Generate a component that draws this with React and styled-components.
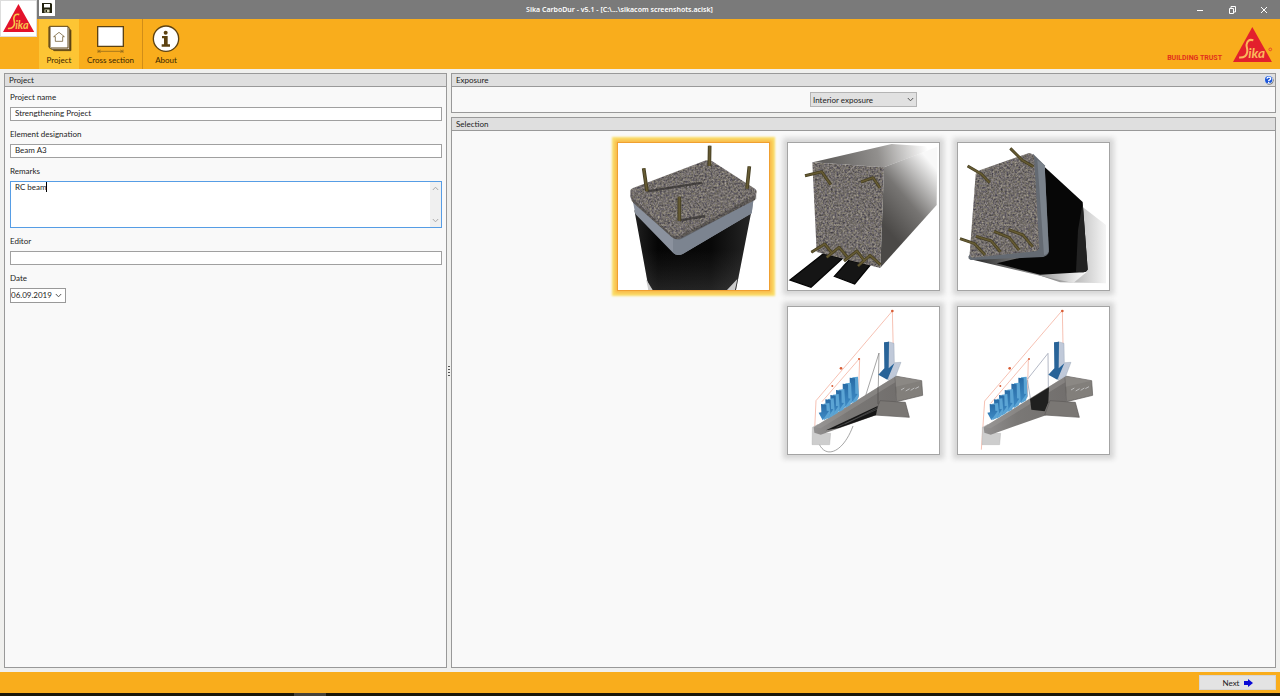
import React from "react";
import styled, { createGlobalStyle } from "styled-components";

const GlobalStyle = createGlobalStyle`
  * { box-sizing: border-box; }
  body { margin: 0; background: #f0f0ee; }
  body, button, input, select, textarea {
    font-family: Lato, "Noto Sans", sans-serif;
    font-size: 8px;
    line-height: 12px;
    color: #1c1c1c;
  }
  svg { display: block; }
`;

const Window = styled.div`
  min-height: 100vh;
  display: flex;
  flex-direction: column;
`;

const Header = styled.header`
  display: grid;
  grid-template-columns: 39px 1fr;
  grid-template-rows: 19px 50px;
  background: #f9ad1c;
`;

const LogoBox = styled.div`
  grid-column: 1;
  grid-row: 1 / 3;
  z-index: 1;
  width: 37px;
  height: 37px;
  padding: 3px 2px;
  background: #fff;
  border: 1px solid #ddd;
`;

const TitleBar = styled.div`
  grid-column: 1 / 3;
  grid-row: 1;
  display: flex;
  align-items: stretch;
  padding-left: 39px;
  background: #7a7a7a;
`;

const SaveButton = styled.button`
  width: 16px;
  height: 16px;
  padding: 3px;
  border: 0;
  background: #fff;
`;

const Title = styled.h1`
  flex: 1;
  margin: 0;
  text-align: center;
  font-family: "Noto Sans", sans-serif;
  font-size: 7px;
  line-height: 19px;
  font-weight: 600;
  color: #fff;
`;

const WindowButton = styled.button`
  display: flex;
  align-items: center;
  justify-content: center;
  width: 32px;
  padding: 0;
  border: 0;
  background: none;
`;

const Toolbar = styled.nav`
  grid-column: 2;
  grid-row: 2;
  display: flex;
`;

const Tool = styled.button`
  display: flex;
  flex-direction: column;
  align-items: center;
  gap: 1px;
  width: ${(p) => p.$width}px;
  padding: 6px 0 0;
  border: 0;
  border-right: ${(p) => (p.$divider ? "1px solid #d08d18" : "0")};
  background: ${(p) => (p.$active ? "#fdc534" : "none")};
  color: #3a2600;
  white-space: nowrap;
`;

const Brand = styled.div`
  display: flex;
  align-items: flex-end;
  gap: 11px;
  margin-left: auto;
  padding: 0 7px 7px 0;
`;

const Slogan = styled.span`
  font-family: Roboto, sans-serif;
  font-size: 7px;
  line-height: 8px;
  font-weight: 700;
  color: #e2311d;
`;

const Main = styled.main`
  flex: 1;
  display: grid;
  grid-template-columns: minmax(0, 443fr) 4px minmax(0, 825fr);
  padding: 4px;
`;

const Splitter = styled.div`
  display: flex;
  align-items: center;
  justify-content: center;
`;

const Column = styled.div`
  display: flex;
  flex-direction: column;
  gap: 4px;
`;

const Panel = styled.section`
  flex: ${(p) => (p.$grow ? "1" : "none")};
  border: 1px solid #999;
  background: #f9f9f9;
`;

const PanelHeader = styled.div`
  display: flex;
  align-items: center;
  justify-content: space-between;
  height: 13px;
  padding: 0 1px 0 4px;
  background: #dfdfdf;
  border-bottom: 1px solid #999;
`;

const PanelTitle = styled.h2`
  margin: 0;
  font-size: 8px;
  line-height: 12px;
  font-weight: 400;
`;

const HelpButton = styled.button`
  padding: 0;
  border: 0;
  background: none;
`;

const Form = styled.form`
  display: flex;
  flex-direction: column;
  gap: 7px;
  padding: 4px 4px 4px 5px;
`;

const Field = styled.div`
  display: flex;
  flex-direction: column;
  align-items: flex-start;
  gap: 4px;
`;

const Label = styled.label`
  line-height: 12px;
`;

const TextInput = styled.input`
  width: 100%;
  height: 14px;
  padding: 0 4px 2px;
  border: 1px solid #a0a0a0;
  background: #fff;
  outline: 0;
`;

const RemarksBox = styled.div`
  position: relative;
  display: flex;
  width: 100%;
  height: 47px;
  border: 1px solid #569de5;
  background: #fff;
`;

const RemarksText = styled.textarea`
  flex: 1;
  padding: 0 4px;
  border: 0;
  outline: 0;
  resize: none;
  overflow: hidden;
  line-height: 10px;
  background: none;
`;

const Caret = styled.span`
  position: absolute;
  left: 35px;
  top: 0;
  width: 1px;
  height: 10px;
  background: #000;
`;

const ScrollTrack = styled.div`
  display: flex;
  flex-direction: column;
  align-items: center;
  justify-content: space-between;
  width: 11px;
  padding: 4px 0;
  background: #f0f0f0;
`;

const DateBox = styled.div`
  display: flex;
  align-items: center;
  width: 56px;
  height: 15px;
  padding-right: 3px;
  border: 1px solid #999;
  background: #fff;
`;

const DateInput = styled.input`
  flex: 1;
  min-width: 0;
  height: 13px;
  padding: 0 0 2px;
  border: 0;
  outline: 0;
  background: none;
`;

const PlainButton = styled.button`
  padding: 0;
  border: 0;
  background: none;
`;

const ExposureBody = styled.div`
  display: flex;
  justify-content: center;
  padding: 5px 0 5px;
`;

const SelectBox = styled.div`
  display: grid;
  align-items: center;
  width: 107px;
  height: 15px;
`;

const Select = styled.select`
  grid-area: 1 / 1;
  width: 100%;
  height: 15px;
  padding: 0 2px;
  appearance: none;
  border: 1px solid #b4b4b4;
  border-radius: 0;
  background: #e1e1e1;
`;

const SelectArrow = styled.span`
  grid-area: 1 / 1;
  justify-self: end;
  margin-right: 3px;
  pointer-events: none;
`;

const Tiles = styled.div`
  display: grid;
  grid-template-columns: repeat(3, 153px);
  grid-auto-rows: 149px;
  gap: 15px 17px;
  justify-content: center;
  padding-top: 11px;
`;

const Tile = styled.button`
  grid-column: ${(p) => p.$column};
  padding: 0;
  border: 1px solid ${(p) => (p.$active ? "#f0a030" : "#a4a4a4")};
  background: #fff;
  box-shadow: ${(p) =>
    p.$active
      ? "0 0 3px 2px #f9b94a, 0 0 2px 5px #fade6a"
      : "0 0 5px 4px #d6d6d6"};
`;

const Footer = styled.footer`
  display: flex;
  justify-content: flex-end;
  height: 21px;
  padding: 3px 4px;
  background: #f9ad1c;
`;

const NextButton = styled.button`
  display: flex;
  align-items: center;
  justify-content: center;
  gap: 4px;
  width: 77px;
  height: 15px;
  padding: 0;
  border: 1px solid #d6d6d6;
  background: #e3e3e3;
`;

const Taskbar = styled.div`
  height: 3px;
  padding-left: 23%;
  background: #1b1708;
`;

const TaskbarItem = styled.div`
  width: 32px;
  height: 3px;
  background: #464238;
`;

function SikaLogo({ width, height, color, ink, mark }) {
  return (
    <svg width={width} height={height} viewBox="0 0 118 103" role="img" aria-label="Sika">
      <path d="M57 0L115 103H0Z" fill={color} />
      <g fill={ink} fontFamily="Lato, sans-serif" fontStyle="italic" fontWeight="700">
        <text x="45" y="91" fontSize="40">ika</text>
      </g>
      <path d="M60 39C46 35 42 42 40 52C39 60 44 64 42 74C40 86 33 91 18 90" fill="none" stroke={ink} strokeWidth="6" />
      {mark && <circle cx="110" cy="66" r="4" fill="none" stroke={color} strokeWidth="2" />}
    </svg>
  );
}

function Chevron({ up, color = "#555" }) {
  return (
    <svg width="7" height="5" viewBox="0 0 7 5" fill="none" stroke={color}>
      <path d={up ? "M.8 4L3.500 1.200L6.200 4" : "M.8 1L3.500 3.800L6.200 1"} />
    </svg>
  );
}

function SaveIcon() {
  return (
    <svg width="10" height="10" viewBox="0 0 10 10">
      <path d="M0 0H9L10 1V10H0Z" fill="#22220f" />
      <path d="M2 1H8V4.500H2Z" fill="#fff" />
      <path d="M2.500 6.500H7.500V9.500H2.500Z" fill="#dcdcbc" />
      <path d="M3.500 7H5V9H3.500Z" fill="#22220f" />
    </svg>
  );
}

function ProjectIcon() {
  return (
    <svg width="25" height="28" viewBox="141 75 75 84" stroke="#5c4212">
      <path d="M155 85H207L213 91V152H162L155 146Z" fill="#5c4212" strokeWidth="2" />
      <path d="M153 83H208V148H153Z" fill="#fff" strokeWidth="2" />
      <path d="M148 79H204V144H148Z" fill="#fff" strokeWidth="3" />
      <path d="M144 84h9M144 90h9M144 96h9M144 102h9M144 108h9M144 114h9M144 120h9M144 126h9M144 132h9M144 138h9" strokeWidth="3" />
      <path d="M161 110L177 97L193 110H188V124H166V110Z" fill="none" strokeWidth="2" />
    </svg>
  );
}

function CrossSectionIcon() {
  return (
    <svg width="29" height="28" viewBox="291 75 87 84" stroke="#5c4212">
      <path d="M296 80H373V139H296Z" fill="#fff" strokeWidth="4" />
      <path d="M298 154H371M297 149V159M372 149V159M305 150L298 154L305 158M364 150L371 154L364 158" fill="none" stroke="#805d1b" strokeWidth="2" />
    </svg>
  );
}

function AboutIcon() {
  return (
    <svg width="28" height="28" viewBox="456 75 84 84">
      <circle cx="498" cy="116" r="38" fill="#fff" stroke="#5c4212" strokeWidth="4" />
      <circle cx="497" cy="98" r="6" fill="#5c4212" />
      <path d="M486 108H503V133H510V140H485V133H492V115H486Z" fill="#5c4212" />
    </svg>
  );
}

function HelpIcon() {
  return (
    <svg width="10" height="10" viewBox="0 0 30 30">
      <circle cx="16" cy="16" r="13" fill="#777" />
      <circle cx="14" cy="14" r="13" fill="#d5e6fa" />
      <circle cx="14" cy="14" r="11" fill="#1c55d8" />
      <path d="M9 11C9 5 20 5 20 11C20 15 14 14 14 18M14 20V24" fill="none" stroke="#fff" strokeWidth="4" />
    </svg>
  );
}

function Defs() {
  return (
    <svg width="0" height="0" aria-hidden="true">
      <defs>
        <filter id="concrete" x="0" y="0" width="100%" height="100%" colorInterpolationFilters="sRGB">
          <feTurbulence type="fractalNoise" baseFrequency="0.17" numOctaves="3" seed="5" result="noise" />
          <feColorMatrix in="noise" type="matrix" values=".42 .28 0 0 .1  .4 .28 0 0 .09  .36 .2 .12 0 .08  0 0 0 0 1" result="grain" />
          <feComposite in="grain" in2="SourceGraphic" operator="in" />
        </filter>
        <linearGradient id="wrapFront" x1="0" y1="0" x2="1" y2="0">
          <stop offset="0" stopColor="#202020" />
          <stop offset=".2" stopColor="#050505" />
          <stop offset=".65" stopColor="#080808" />
          <stop offset="1" stopColor="#262626" />
        </linearGradient>
        <linearGradient id="wrapFade" x1="0" y1="0" x2="0" y2="1">
          <stop offset=".5" stopColor="#555" stopOpacity="0" />
          <stop offset="1" stopColor="#666" stopOpacity=".3" />
        </linearGradient>
        <linearGradient id="beamSide" gradientUnits="userSpaceOnUse" x1="305" y1="280" x2="480" y2="130">
          <stop offset="0" stopColor="#4b4947" />
          <stop offset=".45" stopColor="#777573" />
          <stop offset="1" stopColor="#f8f8f8" />
        </linearGradient>
        <linearGradient id="beamTop" gradientUnits="userSpaceOnUse" x1="150" y1="110" x2="440" y2="45">
          <stop offset="0" stopColor="#63615f" />
          <stop offset=".5" stopColor="#92908e" />
          <stop offset="1" stopColor="#fff" />
        </linearGradient>
        <linearGradient id="haze" x1="0" y1="0" x2="1" y2="0">
          <stop offset="0" stopColor="#777" />
          <stop offset="1" stopColor="#f5f5f5" />
        </linearGradient>
        <linearGradient id="underside" x1="0" y1="0" x2="1" y2="0">
          <stop offset="0" stopColor="#222" />
          <stop offset=".6" stopColor="#999" />
          <stop offset="1" stopColor="#fff" />
        </linearGradient>
        <linearGradient id="girder" x1="0" y1="0" x2="1" y2="0">
          <stop offset="0" stopColor="#929090" />
          <stop offset=".4" stopColor="#7a7876" />
          <stop offset="1" stopColor="#726f6d" />
        </linearGradient>
        <linearGradient id="load" x1="0" y1="0" x2="0" y2="1">
          <stop offset="0" stopColor="#286ba5" />
          <stop offset="1" stopColor="#3f8cc6" />
        </linearGradient>
      </defs>
    </svg>
  );
}

function Bars({ d, width = 11 }) {
  return (
    <g fill="none" strokeLinejoin="round">
      <path d={d} stroke="#463f23" strokeWidth={width} />
      <path d={d} stroke="#665b33" strokeWidth={width / 2} />
    </g>
  );
}

function WrappedColumn() {
  return (
    <svg width="151" height="147" viewBox="39 39 453 441">
      <path d="M88 240L218 374L441 235L393 480H132Z" fill="url(#wrapFront)" />
      <path d="M88 240L218 374L441 235L393 480H132Z" fill="url(#wrapFade)" />
      <path d="M123 447L143 480H130ZM397 447L390 480H366Z" fill="#ccc" />
      <path d="M79 190L204 318L448 190L440 250L233 372Q216 379 204 368L91 252Z" fill="#8b929e" />
      <path d="M204 318L448 190L440 250L233 372Q216 379 204 368Z" fill="#7c8490" />
      <path d="M76 183Q75 178 84 174L303 91Q313 89 322 94L450 176Q458 182 454 191L450 210L230 323Q213 332 200 321L87 220Q78 213 76 200Z" fill="#686563" filter="url(#concrete)" />
      <path d="M77 192Q77 200 89 211L200 314Q214 322 230 314L454 194V207L230 326Q213 333 200 321L84 218Z" fill="#373533" opacity=".4" />
      <path d="M127 184L292 158M224 272L301 258" stroke="#343130" strokeWidth="7" opacity=".75" />
      <Bars d="M116 115L126 184M314 47L313 108M433 109L426 176M223 200L223 273" />
    </svg>
  );
}

function PlateBeam() {
  return (
    <svg width="151" height="147" viewBox="24 39 453 441">
      <path d="M30 450L132 370L187 386L93 472ZM163 439L207 390L271 405L224 462Z" fill="#151515" stroke="#050505" strokeWidth="4" />
      <path d="M98 97L335 42L473 51L312 112Z" fill="url(#beamTop)" />
      <path d="M312 112L472 50L470 225L301 413Z" fill="url(#beamSide)" />
      <path d="M97 97L312 112L301 414L110 366Z" fill="#777" filter="url(#concrete)" />
      <Bars d="M75 137L125 125L152 164M243 156L279 143L300 174M94 367L134 342L156 369M140 382L177 352L202 381M192 393L231 363L255 395M234 408L270 376L301 404" width={9} />
    </svg>
  );
}

function WrappedBeam() {
  return (
    <svg width="151" height="147" viewBox="24 39 453 441">
      <path d="M398 231L468 285V460L330 457L265 435L410 426Z" fill="url(#haze)" />
      <path d="M55 386L270 437L370 459L410 426L150 365Z" fill="url(#underside)" />
      <path d="M284 111L398 216L413 418Q410 428 397 427L270 434L140 400L290 365Z" fill="#070707" />
      <path d="M398 218L413 418Q410 428 397 427L378 425L384 300Z" fill="#222" />
      <path d="M55 380L249 71L284 106L297 365Q294 377 280 381L68 390Q56 390 55 380Z" fill="#646a72" />
      <path d="M262 90L284 106L296 360Q294 373 282 375Z" fill="#7a828b" />
      <path d="M77 132Q80 124 91 120L237 69Q245 69 252 78L268 352Q267 361 256 364L68 383Q58 382 59 371Z" fill="#777" filter="url(#concrete)" />
      <Bars d="M53 108L94 132L119 158M181 55L217 91L250 110M30 326L74 341L105 375M78 319L124 333L151 365M132 304L178 323L207 360M176 299L219 315L248 350" width={9} />
    </svg>
  );
}

const distributedLoads = [
  [208, 232, 78],
  [187, 250, 74],
  [167, 269, 68],
  [150, 284, 63],
  [135, 297, 59],
  [122, 311, 50],
];

function LoadedGirder({ shear }) {
  return (
    <svg width="151" height="147" viewBox="24 21 453 441">
      <g fill="none" stroke="#f2a18d" strokeWidth="2">
        <path d={shear ? "M104 303L337 31L341 235M104 303L94 449M122 310L235 178L232 292" : "M108 302L337 33L342 239M108 302L102 430M126 305L239 175L235 295"} />
        <g fill="#d95d35" stroke="none">
          <circle cx="337" cy="33" r="4" />
          <circle cx={shear ? 179 : 183} cy="205" r="4" />
          <circle cx={shear ? 151 : 157} cy="258" r="3" />
          <circle cx="237" cy="177" r="3" />
        </g>
      </g>
      {shear ? (
        <path d="M232 238L294 160L295 265M242 300L232 240" fill="none" stroke="#8d94a7" strokeWidth="2" />
      ) : (
        <path d="M244 328L297 159L294 298M110 405C121 482 185 470 219 378" fill="none" stroke="#777" strokeWidth="2" />
      )}
      <path d="M97 382L114 373L116 400H152L149 434H96Z" fill="#cdcdcd" stroke="#aaa" strokeWidth="1" />
      <path d="M101 382L348 228L350 305L290 345L122 404L103 398Z" fill="url(#girder)" />
      <path d="M101 382L348 228L347 246L122 385Z" fill="#a09d9a" opacity=".4" />
      <path d="M300 302L376 307L388 352L284 345Z" fill="#7a7774" stroke="#5c5957" strokeWidth="2" />
      <path d="M345 228L425 242L428 286L350 305Z" fill="#827f7b" stroke="#5c5957" strokeWidth="2" />
      <path d="M345 228L425 242L347 260Z" fill="#918e8a" opacity=".6" />
      <path d="M363 270l10-6M377 273l12-7M392 271l11-7M406 266l11-6" stroke="#bbb" strokeWidth="3" />
      {shear ? (
        <path d="M240 297L297 262L295 307L284 334L244 329Z" fill="#20201f" />
      ) : (
        <g>
          <path d="M138 391L293 318L288 345L176 384Z" fill="#151515" />
          <path d="M170 382L291 328M195 372L292 323" stroke="#555" strokeWidth="2" />
          <path d="M294 262V312" stroke="#4b4948" strokeWidth="2" />
        </g>
      )}
      <g>
        {distributedLoads.map(([x, y, h]) => (
          <g key={x} transform={`translate(${shear ? x - 4 : x} ${y})`}>
            <path d={`M9 0L26 -2L29 ${h - 22}L23 ${h - 8}L9 ${h}Z`} fill="#5ba4d4" />
            <path d={`M1 1L17 3L18 ${h - 29}L25 ${h - 28}L6 ${h}L-6 ${h - 23}L2 ${h - 24}Z`} fill="url(#load)" />
          </g>
        ))}
      </g>
      <path d="M325 125L342 130L343 188L363 187L347 229L324 241Z" fill="#c0c9d9" stroke="#8391a5" strokeWidth="1" />
      <path d="M312 127L327 125L326 205L343 190L322 239L295 224L313 205Z" fill="#286398" />
    </svg>
  );
}

export default function App() {
  return (
    <Window>
      <GlobalStyle />
      <Header>
        <TitleBar>
          <SaveButton aria-label="Save"><SaveIcon /></SaveButton>
          <Title>Sika CarboDur - v5.1 - [C:\...\sikacom screenshots.acisk]</Title>
          <WindowButton aria-label="Minimize">
            <svg width="8" height="8" viewBox="0 0 8 8" stroke="#fff"><path d="M1 4.500H7" /></svg>
          </WindowButton>
          <WindowButton aria-label="Restore">
            <svg width="8" height="8" viewBox="0 0 8 8" fill="none" stroke="#fff"><path d="M1.500 2.500H5.500V7.500H1.500ZM3 2.500V.5H7.500V6H5.500" /></svg>
          </WindowButton>
          <WindowButton aria-label="Close">
            <svg width="8" height="8" viewBox="0 0 8 8" stroke="#fff"><path d="M1 1L7 7M7 1L1 7" /></svg>
          </WindowButton>
        </TitleBar>
        <LogoBox><SikaLogo width={32} height={28} color="#e3132b" ink="#f7c64b" /></LogoBox>
        <Toolbar>
          <Tool $width={40} $active><ProjectIcon />Project</Tool>
          <Tool $width={64} $divider><CrossSectionIcon />Cross section</Tool>
          <Tool $width={46}><AboutIcon />About</Tool>
          <Brand>
            <Slogan>BUILDING TRUST</Slogan>
            <SikaLogo width={40} height={35} color="#e3202c" ink="#fbb95b" mark />
          </Brand>
        </Toolbar>
      </Header>
      <Main>
        <Panel>
          <PanelHeader><PanelTitle>Project</PanelTitle></PanelHeader>
          <Form>
            <Field>
              <Label htmlFor="name">Project name</Label>
              <TextInput id="name" defaultValue="Strengthening Project" />
            </Field>
            <Field>
              <Label htmlFor="element">Element designation</Label>
              <TextInput id="element" defaultValue="Beam A3" />
            </Field>
            <Field>
              <Label htmlFor="remarks">Remarks</Label>
              <RemarksBox>
                <RemarksText id="remarks" defaultValue="RC beam" />
                <Caret />
                <ScrollTrack>
                  <Chevron up color="#aaa" />
                  <Chevron color="#aaa" />
                </ScrollTrack>
              </RemarksBox>
            </Field>
            <Field>
              <Label htmlFor="editor">Editor</Label>
              <TextInput id="editor" />
            </Field>
            <Field>
              <Label htmlFor="date">Date</Label>
              <DateBox>
                <DateInput id="date" defaultValue="06.09.2019" />
                <PlainButton type="button" aria-label="Choose date"><Chevron /></PlainButton>
              </DateBox>
            </Field>
          </Form>
        </Panel>
        <Splitter>
          <svg width="2" height="10" viewBox="0 0 2 10" fill="#555">
            <path d="M0 0H2V1H0ZM0 3H2V4H0ZM0 6H2V7H0ZM0 9H2V10H0Z" />
          </svg>
        </Splitter>
        <Column>
          <Panel>
            <PanelHeader>
              <PanelTitle><label htmlFor="exposure">Exposure</label></PanelTitle>
              <HelpButton aria-label="Help"><HelpIcon /></HelpButton>
            </PanelHeader>
            <ExposureBody>
              <SelectBox>
                <Select id="exposure" defaultValue="interior">
                  <option value="interior">Interior exposure</option>
                </Select>
                <SelectArrow><Chevron /></SelectArrow>
              </SelectBox>
            </ExposureBody>
          </Panel>
          <Panel $grow>
            <PanelHeader><PanelTitle>Selection</PanelTitle></PanelHeader>
            <Defs />
            <Tiles>
              <Tile $column={1} $active aria-label="Column confinement"><WrappedColumn /></Tile>
              <Tile $column={2} aria-label="Flexural strengthening with plates"><PlateBeam /></Tile>
              <Tile $column={3} aria-label="Beam wrapping"><WrappedBeam /></Tile>
              <Tile $column={2} aria-label="Flexural strengthening of a loaded girder"><LoadedGirder /></Tile>
              <Tile $column={3} aria-label="Shear strengthening of a loaded girder"><LoadedGirder shear /></Tile>
            </Tiles>
          </Panel>
        </Column>
      </Main>
      <Footer>
        <NextButton>
          Next
          <svg width="9" height="8" viewBox="0 0 9 8"><path d="M0 2H4V0L9 4L4 8V6H0Z" fill="#0909d5" /></svg>
        </NextButton>
      </Footer>
      <Taskbar><TaskbarItem /></Taskbar>
    </Window>
  );
}
